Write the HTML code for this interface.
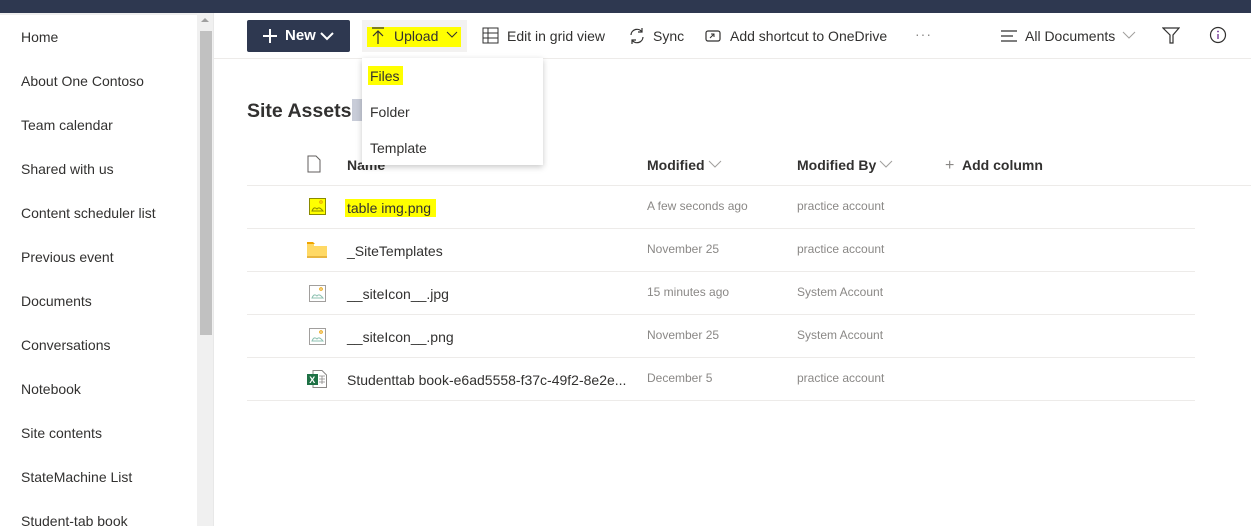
<!DOCTYPE html>
<html><head><meta charset="utf-8"><style>
*{margin:0;padding:0;box-sizing:border-box}
body{width:1251px;height:526px;overflow:hidden;background:#fff;font-family:"Liberation Sans",sans-serif;color:#323130;position:relative}
.top{position:absolute;left:0;top:0;width:1251px;height:13px;background:#2e3850}
.side{position:absolute;left:0;top:13px;width:197px;height:513px;background:#fff;border-top:2px solid #eee}
.side div{position:absolute;left:21px;font-size:14px;color:#323130}
.sb{position:absolute;left:197px;top:13px;width:16px;height:513px;background:#f0f0f0}
.thumb{position:absolute;left:200px;top:31px;width:12px;height:304px;background:#c1c1c1}
.sep{position:absolute;left:213px;top:13px;width:1px;height:513px;background:#e8e8e8}
.abs{position:absolute;white-space:nowrap}
.tb{font-size:14px;color:#323130}
.hl{background:#ffff00}
.line{position:absolute;height:1px;background:#edebe9}
.mod{font-size:12px;color:#8a8886}
.nm{font-size:14px;color:#323130}
.hd{font-size:14px;font-weight:bold;color:#323130}
</style></head><body>
<div class="top"></div>
<div class="side">
<div style="top:14px">Home</div>
<div style="top:58px">About One Contoso</div>
<div style="top:102px">Team calendar</div>
<div style="top:146px">Shared with us</div>
<div style="top:190px">Content scheduler list</div>
<div style="top:234px">Previous event</div>
<div style="top:278px">Documents</div>
<div style="top:322px">Conversations</div>
<div style="top:366px">Notebook</div>
<div style="top:410px">Site contents</div>
<div style="top:454px">StateMachine List</div>
<div style="top:498px">Student-tab book</div>
</div>
<div class="sb"></div>
<svg class="abs" style="left:201px;top:17px" width="8" height="6"><path d="M0 5L4 1L8 5Z" fill="#a0a0a0"/></svg>
<div class="thumb"></div>
<div class="sep"></div>

<div class="abs" style="left:247px;top:20px;width:103px;height:32px;background:#2e3850;border-radius:2px;color:#fff;font-size:15px;font-weight:bold;">
<svg class="abs" style="left:15px;top:8px" width="16" height="16"><path d="M8 1V15M1 8H15" stroke="#fff" stroke-width="2"/></svg>
<span class="abs" style="left:38px;top:7px">New</span>
<svg class="abs" style="left:73px;top:11px" width="14" height="10"><path d="M1 2L7 8L13 2" stroke="#fff" stroke-width="2" fill="none"/></svg>
</div>
<div class="abs" style="left:362px;top:20px;width:105px;height:32px;background:#f3f2f1"></div>
<div class="abs hl" style="left:367px;top:27px;width:94px;height:20px"></div>
<svg class="abs" style="left:371px;top:27px" width="14" height="18"><path d="M1 1H13M7 4V17M2 9L7 4L12 9" stroke="#323130" stroke-width="1.2" fill="none"/></svg>
<span class="abs tb" style="left:394px;top:28px">Upload</span>
<svg class="abs" style="left:446px;top:31px" width="12" height="8"><path d="M1 1L6 6L11 1" stroke="#323130" stroke-width="1" fill="none"/></svg>
<svg class="abs" style="left:482px;top:27px" width="17" height="17"><rect x="1" y="1" width="15" height="15" fill="none" stroke="#323130"/><path d="M1 6H16M1 11H16M6 1V16" stroke="#323130"/></svg>
<span class="abs tb" style="left:507px;top:28px">Edit in grid view</span>
<svg class="abs" style="left:628px;top:27px" width="18" height="18"><path d="M3 8A6 6 0 0 1 14 5M15 10A6 6 0 0 1 4 13M14 1V5H10M4 17V13H8" stroke="#323130" fill="none" stroke-width="1.2"/></svg>
<span class="abs tb" style="left:653px;top:28px">Sync</span>
<svg class="abs" style="left:704px;top:27px" width="18" height="18"><rect x="2" y="4" width="14" height="10" rx="2" fill="none" stroke="#323130" stroke-width="1.2"/><path d="M6 11L10 7M7 7H10V10" stroke="#323130" fill="none"/></svg>
<span class="abs tb" style="left:730px;top:28px">Add shortcut to OneDrive</span>
<span class="abs" style="left:915px;top:26px;color:#8a8886;font-size:14px;letter-spacing:1px">···</span>
<svg class="abs" style="left:1000px;top:29px" width="18" height="14"><path d="M1 2H17M1 7H13M1 12H17" stroke="#323130" stroke-width="1.2"/></svg>
<span class="abs tb" style="left:1025px;top:28px">All Documents</span>
<svg class="abs" style="left:1122px;top:31px" width="14" height="8"><path d="M1 1L7 7L13 1" stroke="#a19f9d" fill="none"/></svg>
<svg class="abs" style="left:1162px;top:27px" width="18" height="17"><path d="M1 1H17L11 8V16H8V8Z" stroke="#323130" fill="none" stroke-width="1.2"/></svg>
<svg class="abs" style="left:1209px;top:26px" width="18" height="18"><circle cx="9" cy="9" r="7.5" stroke="#323130" fill="none" stroke-width="1.2"/><path d="M9 8V13" stroke="#6b2c91" stroke-width="1.3"/><circle cx="9" cy="5.5" r="0.9" fill="#6b2c91"/></svg>
<div class="line" style="left:214px;top:58px;width:1037px"></div>

<span class="abs" style="left:247px;top:100px;font-size:19.5px;font-weight:bold;color:#323130">Site Assets</span>
<div class="abs" style="left:352px;top:99px;width:12px;height:22px;background:#c8ccd8"></div>

<svg class="abs" style="left:307px;top:155px" width="14" height="18"><path d="M1 1H9L13 5V17H1Z" fill="none" stroke="#605e5c"/></svg>
<span class="abs hd" style="left:347px;top:157px">Name</span>
<span class="abs hd" style="left:647px;top:157px">Modified</span>
<svg class="abs" style="left:708px;top:160px" width="14" height="8"><path d="M1 1L7 7L13 1" stroke="#a19f9d" fill="none"/></svg>
<span class="abs hd" style="left:797px;top:157px">Modified By</span>
<svg class="abs" style="left:879px;top:160px" width="14" height="8"><path d="M1 1L7 7L13 1" stroke="#a19f9d" fill="none"/></svg>
<span class="abs" style="left:945px;top:157px;font-size:16px;color:#8a8886">+</span>
<span class="abs hd" style="left:962px;top:157px">Add column</span>
<div class="line" style="left:247px;top:185px;width:1004px"></div>

<div class="abs hl" style="left:309px;top:198px;width:17px;height:17px"></div>
<svg class="abs" style="left:309px;top:198px" width="17" height="17"><rect x="0.5" y="0.5" width="16" height="16" fill="none" stroke="#8a8a00"/><path d="M3 13Q5 8 8 11Q10 8 14 13Z" fill="none" stroke="#8a8a00"/><circle cx="12" cy="4" r="1.3" fill="none" stroke="#e8a000"/></svg>
<div class="abs hl" style="left:345px;top:199px;width:91px;height:18px"></div>
<span class="abs nm" style="left:347px;top:200px">table img.png</span>
<span class="abs mod" style="left:647px;top:199px">A few seconds ago</span>
<span class="abs mod" style="left:797px;top:199px">practice account</span>
<div class="line" style="left:247px;top:228px;width:948px"></div>

<svg class="abs" style="left:307px;top:242px" width="20" height="16"><path d="M0 2H7V4H20V16H0Z" fill="#ffd965"/><path d="M0 0H6L8 2H0Z" fill="#f0a500"/><rect x="0" y="14" width="20" height="2" fill="#e8b640"/></svg>
<span class="abs nm" style="left:347px;top:243px">_SiteTemplates</span>
<span class="abs mod" style="left:647px;top:242px">November 25</span>
<span class="abs mod" style="left:797px;top:242px">practice account</span>
<div class="line" style="left:247px;top:271px;width:948px"></div>

<svg class="abs" style="left:309px;top:285px" width="17" height="17"><rect x="0.5" y="0.5" width="16" height="16" fill="#fff" stroke="#a19f9d"/><path d="M3 13Q5 8 8 11Q10 8 14 13Z" fill="none" stroke="#8cc0b0"/><circle cx="12" cy="4" r="1.3" fill="none" stroke="#e8a000"/></svg>
<span class="abs nm" style="left:347px;top:286px">__siteIcon__.jpg</span>
<span class="abs mod" style="left:647px;top:285px">15 minutes ago</span>
<span class="abs mod" style="left:797px;top:285px">System Account</span>
<div class="line" style="left:247px;top:314px;width:948px"></div>

<svg class="abs" style="left:309px;top:328px" width="17" height="17"><rect x="0.5" y="0.5" width="16" height="16" fill="#fff" stroke="#a19f9d"/><path d="M3 13Q5 8 8 11Q10 8 14 13Z" fill="none" stroke="#8cc0b0"/><circle cx="12" cy="4" r="1.3" fill="none" stroke="#e8a000"/></svg>
<span class="abs nm" style="left:347px;top:329px">__siteIcon__.png</span>
<span class="abs mod" style="left:647px;top:328px">November 25</span>
<span class="abs mod" style="left:797px;top:328px">System Account</span>
<div class="line" style="left:247px;top:357px;width:948px"></div>

<svg class="abs" style="left:307px;top:370px" width="20" height="18"><path d="M6 0.5H15L19.5 5V17.5H6Z" fill="#fff" stroke="#8a8886"/><path d="M12 6H18M12 9H18M12 12H18M15 6V14" stroke="#8a8886" stroke-width="0.8"/><rect x="0" y="4" width="11" height="11" fill="#1e7145"/><text x="2.3" y="13" font-size="9" font-weight="bold" fill="#fff" font-family="Liberation Sans">X</text></svg>
<span class="abs nm" style="left:347px;top:372px">Studenttab book-e6ad5558-f37c-49f2-8e2e...</span>
<span class="abs mod" style="left:647px;top:371px">December 5</span>
<span class="abs mod" style="left:797px;top:371px">practice account</span>
<div class="line" style="left:247px;top:400px;width:948px"></div>

<div class="abs" style="left:362px;top:58px;width:181px;height:107px;background:#fff;box-shadow:0 2px 6px rgba(0,0,0,0.22)"></div>
<div class="abs hl" style="left:368px;top:66px;width:35px;height:19px"></div>
<span class="abs tb" style="left:370px;top:68px">Files</span>
<span class="abs tb" style="left:370px;top:104px">Folder</span>
<span class="abs tb" style="left:370px;top:140px">Template</span>
</body></html>
